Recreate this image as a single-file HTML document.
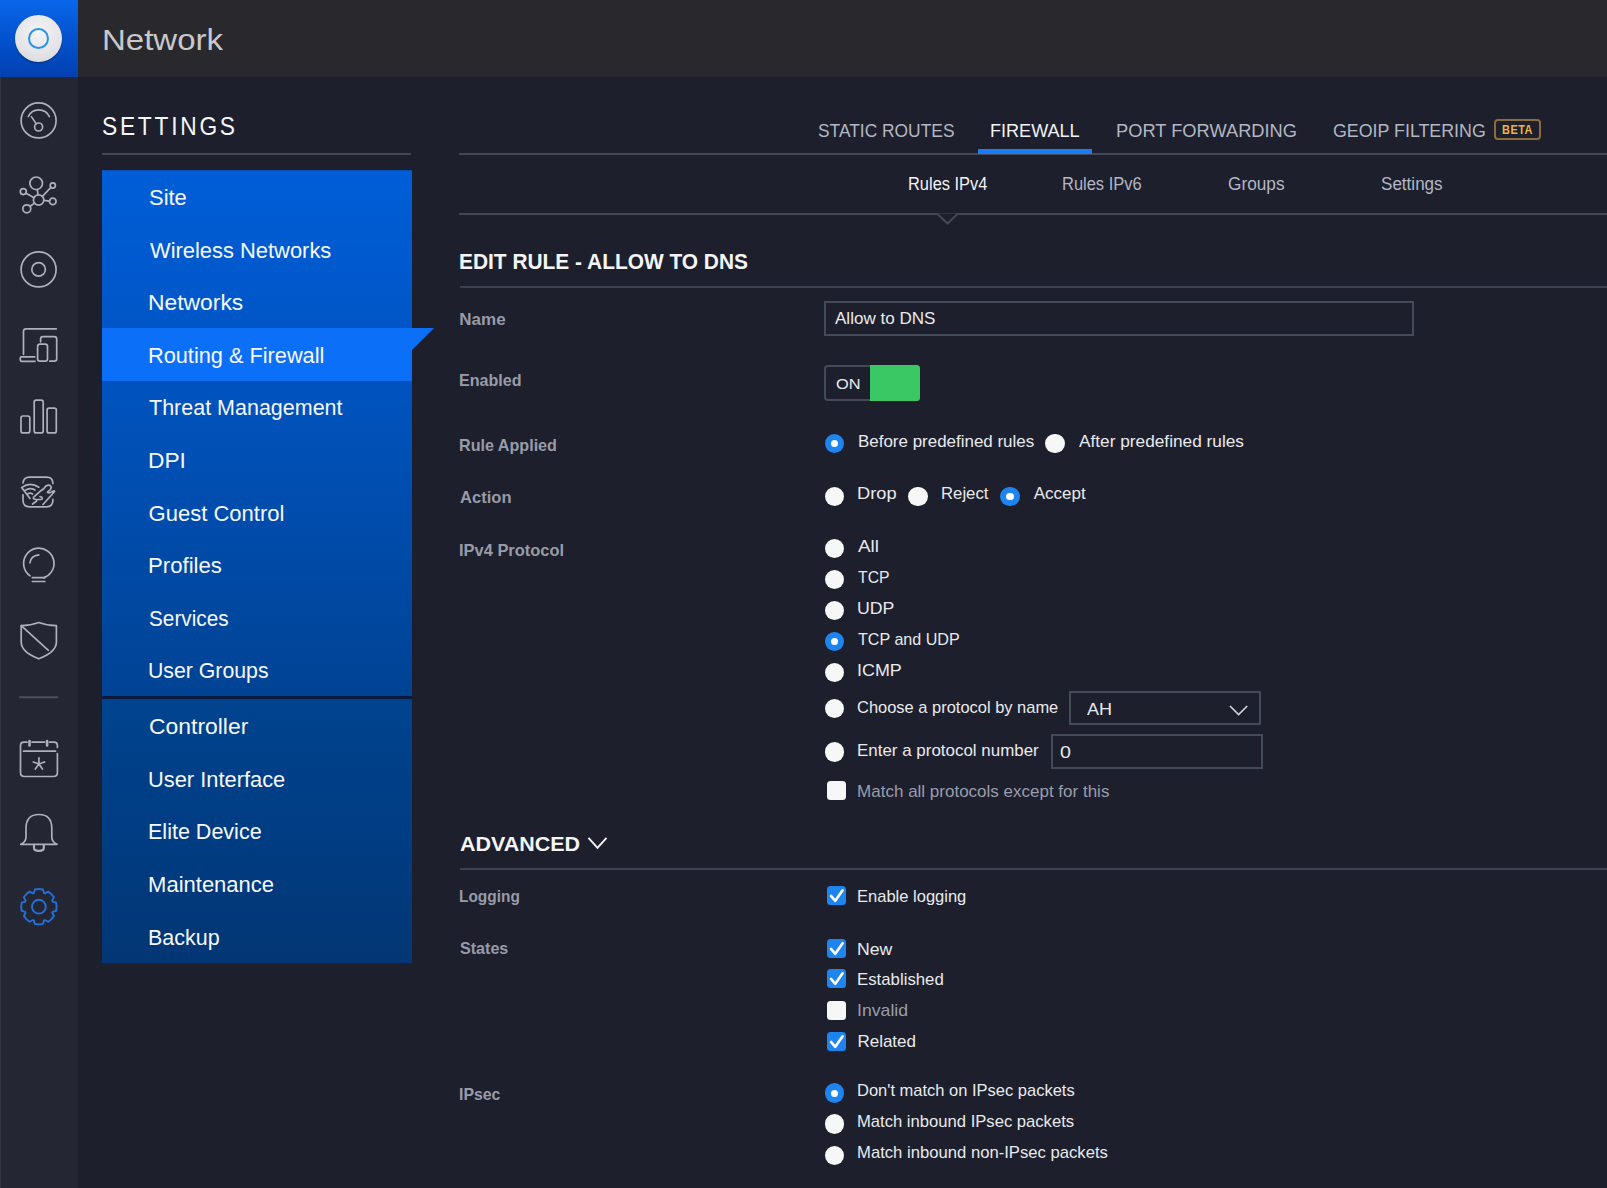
<!DOCTYPE html>
<html><head><meta charset="utf-8"><title>Network - Settings</title>
<style>
html,body{margin:0;padding:0;width:1607px;height:1188px;overflow:hidden;background:#1d1f2c;}
body{position:relative;font-family:"Liberation Sans",sans-serif;}
.t{position:absolute;white-space:nowrap;transform-origin:0 0;}
.b{position:absolute;box-sizing:content-box;}
svg.b{overflow:visible;}
</style></head><body>
<div class="b" style="left:0px;top:0px;width:1607px;height:77px;background:#29292d;"></div>
<div class="b" style="left:0px;top:0px;width:78px;height:77px;background:linear-gradient(180deg,#0a66ea 0%,#0352cf 50%,#0240b0 100%);"></div>
<div class="b" style="left:15px;top:15px;width:47px;height:47px;border-radius:50%;background:radial-gradient(circle at 50% 35%,#f4f4f6 0%,#e4e4e8 60%,#cfd0d6 100%);box-shadow:0 1px 2px rgba(0,0,0,0.35);"></div>
<div class="b" style="left:28px;top:28px;width:17px;height:17px;border-radius:50%;border:2px solid #2e90e6;"></div>
<div class="t" style="left:102.32px;top:25.31px;font-size:30px;line-height:30px;color:#c8c8cc;font-weight:400;transform:scaleX(1.0996);">Network</div>
<div class="b" style="left:0px;top:77px;width:78px;height:1111px;background:#242633;"></div>
<div class="b" style="left:0px;top:77px;width:1px;height:1111px;background:#333542;"></div>
<div class="b" style="left:6px;top:77px;width:1px;height:1111px;background:#282a37;"></div>
<svg class="b" style="left:0;top:77px" width="78" height="1111" viewBox="0 77 78 1111" fill="none" stroke="#adb0bd" stroke-width="1.7" stroke-linecap="round" stroke-linejoin="round">
<circle cx="38.6" cy="120.4" r="17.5"/>
<path d="M28.3 116.5 A11.6 11.6 0 0 1 49.3 116.5"/>
<path d="M31.4 116.6 L36.3 123.9"/>
<circle cx="38.6" cy="127" r="4"/>
<circle cx="38.6" cy="200" r="5.2"/>
<circle cx="36.2" cy="183.3" r="6.3"/>
<circle cx="23.3" cy="191.6" r="3"/>
<circle cx="52.8" cy="185.5" r="2.6"/>
<circle cx="52.8" cy="201.4" r="3.3"/>
<circle cx="26.8" cy="208.8" r="4"/>
<path d="M37.4 189.6 L38 194.8 M26 193.2 L33.7 197.6 M50.9 187.4 L42.4 196.3 M49.5 201.1 L43.8 200.4 M30.1 206.3 L34.4 203.1"/>
<circle cx="38.6" cy="269.4" r="17.5"/>
<circle cx="38.6" cy="269.4" r="6.8"/>
<path d="M56.3 328.8 H26 Q23.5 328.8 23.5 331.3 V354.3"/>
<path d="M34.7 356.8 H21.5 Q20.3 356.8 20.3 358 V360 Q20.3 361.3 21.5 361.3 H35"/>
<path d="M40.6 341.8 V339 Q40.6 336.6 43 336.6 H54.3 Q56.7 336.6 56.7 339 V358.8 Q56.7 361.2 54.3 361.2 H49.8"/>
<rect x="37.6" y="344.2" width="9.9" height="17" rx="2.4"/>
<rect x="21" y="416" width="8.8" height="16.9" rx="2"/>
<rect x="34.2" y="400.2" width="9" height="32.7" rx="2"/>
<rect x="47.1" y="408.1" width="9.2" height="24.8" rx="2"/>
<path d="M23 483 Q23.5 477.1 29.5 477.1 H46.4 Q52.9 477.1 52.9 483.4 M52.9 499.4 V500.3 Q52.9 506.8 46.4 506.8 H29.5 Q23 506.8 23 500.3 V494.8"/>
<path d="M21.6 487.6 L30 498.4 M21.6 487.6 Q30 481.5 38.8 487.2 M24.7 490.6 Q30 487 35 490 M27.5 494 Q30 492.3 32.5 494"/>
<path d="M33.4 497.3 Q33 499.5 36 499.5 H41 Q43.5 499 41.5 497 L40 496.5 M33.4 497.3 L41 490.6 Q43.5 489.5 46 486 Q49 484 51 486.2 Q52 489 48 491.5 L47.5 492.3 Q49 493.5 52 491.8 Q55 490 54.4 491.8 L43 504.5 M32.5 504 L36.7 501"/>
<circle cx="38.8" cy="563.4" r="15.2" stroke-dasharray="81 14.5" transform="rotate(125 38.8 563.4)"/>
<path d="M32.4 577.7 H44.9 M32.4 581.5 H44.9"/>
<path d="M30 562.8 Q30.5 556 38.8 554.8"/>
<path d="M21.2 625.7 Q31 625.5 38.8 622.5 Q46.6 625.5 56.4 625.7 V642 Q56.4 652 38.8 658.8 Q21.2 652 21.2 642 Z"/>
<path d="M21.2 625.7 L48.4 650.3"/>
<path d="M20 697.2 H57.2" stroke="#4d505d" stroke-width="2"/>
<path d="M27 742.2 H24 Q20.5 742.2 20.5 745.7 V772.5 Q20.5 776.5 24.5 776.5 H53.4 Q57.4 776.5 57.4 772.5 V753.5 M32 742.2 H44.6 M49.6 742.2 H54 Q57.4 742.2 57.4 745.7 V747.5"/>
<path d="M23.5 751.2 H55.5"/>
<path d="M29.5 741 V745.5 M47.1 741 V745.5" stroke-width="2.6"/>
<path d="M38.9 757.8 V764 M33.3 762 L38.9 764 L44.5 762 M35.3 769 L38.9 764 L42.5 769"/>
<path d="M26 828.5 Q26 814.5 38.9 814.5 Q51.8 814.5 51.8 828.5 V837.5 Q52 842 57 844.3 H20.8 Q25.8 842 26 837.5 Z"/>
<path d="M34 845 V848 Q34 850.8 38.9 850.8 Q43.8 850.8 43.8 848 V845" stroke-width="2.2"/>
</svg>
<svg class="b" style="left:0;top:880px" width="78" height="60" viewBox="0 880 78 60" fill="none" stroke="#2170dc" stroke-width="1.9" stroke-linejoin="round"><path d="M33.76 893.04 L34.86 889.47 A17.7 17.7 0 0 1 42.94 889.47 L44.04 893.04 A14.6 14.6 0 0 1 44.93 893.40 L48.23 891.66 A17.7 17.7 0 0 1 53.94 897.37 L52.20 900.67 A14.6 14.6 0 0 1 52.56 901.56 L56.13 902.66 A17.7 17.7 0 0 1 56.13 910.74 L52.56 911.84 A14.6 14.6 0 0 1 52.20 912.73 L53.94 916.03 A17.7 17.7 0 0 1 48.23 921.74 L44.93 920.00 A14.6 14.6 0 0 1 44.04 920.36 L42.94 923.93 A17.7 17.7 0 0 1 34.86 923.93 L33.76 920.36 A14.6 14.6 0 0 1 32.87 920.00 L29.57 921.74 A17.7 17.7 0 0 1 23.86 916.03 L25.60 912.73 A14.6 14.6 0 0 1 25.24 911.84 L21.67 910.74 A17.7 17.7 0 0 1 21.67 902.66 L25.24 901.56 A14.6 14.6 0 0 1 25.60 900.67 L23.86 897.37 A17.7 17.7 0 0 1 29.57 891.66 L32.87 893.40 A14.6 14.6 0 0 1 33.76 893.04 Z"/><circle cx="38.9" cy="906.7" r="6.9"/></svg>
<div class="b" style="left:78px;top:77px;width:1529px;height:1111px;background:#1d1f2c;"></div>
<div class="t" style="left:101.96px;top:114.24px;font-size:25px;line-height:25px;color:#f4f5f7;font-weight:400;letter-spacing:3px;transform:scaleX(0.9110);">SETTINGS</div>
<div class="b" style="left:102px;top:153px;width:309px;height:2px;background:#434855;"></div>
<div class="b" style="left:102px;top:170px;width:310px;height:526px;background:linear-gradient(180deg,#0a4aa8 0px,#005ed8 1.5px,#0056c6 30%,#004394 100%);"></div>
<div class="b" style="left:102px;top:699px;width:310px;height:263.5px;background:linear-gradient(180deg,#00438f 0%,#003c82 55%,#033674 100%);"></div>
<div class="b" style="left:102px;top:696px;width:310px;height:3px;background:#0b1a3a;"></div>
<div class="b" style="left:102px;top:328px;width:310px;height:52.6px;background:#0b6ff8;"></div>
<svg class="b" style="left:411px;top:328px" width="24" height="24"><path d="M0 0 H23.2 L0 23 Z" fill="#0b6ff8"/></svg>
<div class="t" style="left:148.58px;top:186.98px;font-size:22px;line-height:22px;color:#f7f9ff;font-weight:400;transform:scaleX(0.9969);">Site</div>
<div class="t" style="left:149.55px;top:239.58px;font-size:22px;line-height:22px;color:#f7f9ff;font-weight:400;transform:scaleX(0.9954);">Wireless Networks</div>
<div class="t" style="left:148.01px;top:292.18px;font-size:22px;line-height:22px;color:#f7f9ff;font-weight:400;transform:scaleX(1.0394);">Networks</div>
<div class="t" style="left:148.10px;top:344.78px;font-size:22px;line-height:22px;color:#f7f9ff;font-weight:400;transform:scaleX(0.9879);">Routing &amp; Firewall</div>
<div class="t" style="left:149.34px;top:397.38px;font-size:22px;line-height:22px;color:#f7f9ff;font-weight:400;transform:scaleX(0.9768);">Threat Management</div>
<div class="t" style="left:148.02px;top:449.98px;font-size:22px;line-height:22px;color:#f7f9ff;font-weight:400;transform:scaleX(1.0343);">DPI</div>
<div class="t" style="left:148.62px;top:502.58px;font-size:22px;line-height:22px;color:#f7f9ff;font-weight:400;">Guest Control</div>
<div class="t" style="left:148.07px;top:555.18px;font-size:22px;line-height:22px;color:#f7f9ff;font-weight:400;transform:scaleX(1.0078);">Profiles</div>
<div class="t" style="left:148.65px;top:607.78px;font-size:22px;line-height:22px;color:#f7f9ff;font-weight:400;transform:scaleX(0.9434);">Services</div>
<div class="t" style="left:148.20px;top:660.38px;font-size:22px;line-height:22px;color:#f7f9ff;font-weight:400;transform:scaleX(0.9669);">User Groups</div>
<div class="t" style="left:148.57px;top:715.98px;font-size:22px;line-height:22px;color:#f7f9ff;font-weight:400;transform:scaleX(1.0411);">Controller</div>
<div class="t" style="left:148.16px;top:768.68px;font-size:22px;line-height:22px;color:#f7f9ff;font-weight:400;transform:scaleX(0.9931);">User Interface</div>
<div class="t" style="left:148.12px;top:821.38px;font-size:22px;line-height:22px;color:#f7f9ff;font-weight:400;transform:scaleX(0.9783);">Elite Device</div>
<div class="t" style="left:148.08px;top:874.08px;font-size:22px;line-height:22px;color:#f7f9ff;font-weight:400;">Maintenance</div>
<div class="t" style="left:148.12px;top:926.78px;font-size:22px;line-height:22px;color:#f7f9ff;font-weight:400;transform:scaleX(0.9755);">Backup</div>
<div class="t" style="left:817.72px;top:120.72px;font-size:19px;line-height:19px;color:#b3b7c3;font-weight:400;transform:scaleX(0.9148);">STATIC ROUTES</div>
<div class="t" style="left:990.35px;top:120.72px;font-size:19px;line-height:19px;color:#f2f3f6;font-weight:400;transform:scaleX(0.9507);">FIREWALL</div>
<div class="t" style="left:1116.43px;top:120.72px;font-size:19px;line-height:19px;color:#b3b7c3;font-weight:400;transform:scaleX(0.9614);">PORT FORWARDING</div>
<div class="t" style="left:1332.89px;top:120.72px;font-size:19px;line-height:19px;color:#b3b7c3;font-weight:400;transform:scaleX(0.9375);">GEOIP FILTERING</div>
<div class="b" style="box-sizing:border-box;left:1494px;top:119px;width:47px;height:21px;border:2px solid #8a6d3b;border-radius:4px;"></div>
<div class="t" style="left:1502.25px;top:123.94px;font-size:12px;line-height:12px;color:#f0b43c;font-weight:700;letter-spacing:0.6px;transform:scaleX(0.9069);">BETA</div>
<div class="b" style="left:459px;top:153px;width:1148px;height:2px;background:#434855;"></div>
<div class="b" style="left:978px;top:149px;width:114px;height:5px;background:#1a7df6;"></div>
<div class="t" style="left:907.78px;top:174.76px;font-size:18px;line-height:18px;color:#f2f3f6;font-weight:400;transform:scaleX(0.9122);">Rules IPv4</div>
<div class="t" style="left:1062.37px;top:174.76px;font-size:18px;line-height:18px;color:#b3b7c3;font-weight:400;transform:scaleX(0.9149);">Rules IPv6</div>
<div class="t" style="left:1228.47px;top:174.76px;font-size:18px;line-height:18px;color:#b3b7c3;font-weight:400;transform:scaleX(0.9582);">Groups</div>
<div class="t" style="left:1381.11px;top:174.76px;font-size:18px;line-height:18px;color:#b3b7c3;font-weight:400;transform:scaleX(0.9476);">Settings</div>
<div class="b" style="left:459px;top:213px;width:1148px;height:2px;background:#434855;"></div>
<svg class="b" style="left:935px;top:212px" width="26" height="14"><path d="M2 1.5 L12.5 11.5 L23 1.5" fill="#1d1f2c" stroke="#434855" stroke-width="2"/></svg>
<div class="t" style="left:459.13px;top:250.88px;font-size:22px;line-height:22px;color:#f4f5f7;font-weight:700;transform:scaleX(0.9496);">EDIT RULE - ALLOW TO DNS</div>
<div class="b" style="left:460px;top:286px;width:1147px;height:2px;background:#3a4250;"></div>
<div class="t" style="left:459.32px;top:311.11px;font-size:17px;line-height:17px;color:#989ba8;font-weight:700;">Name</div>
<div class="t" style="left:459.38px;top:372.11px;font-size:17px;line-height:17px;color:#989ba8;font-weight:700;transform:scaleX(0.9472);">Enabled</div>
<div class="t" style="left:459.38px;top:437.21px;font-size:17px;line-height:17px;color:#989ba8;font-weight:700;transform:scaleX(0.9484);">Rule Applied</div>
<div class="t" style="left:459.94px;top:489.31px;font-size:17px;line-height:17px;color:#989ba8;font-weight:700;transform:scaleX(0.9745);">Action</div>
<div class="t" style="left:459.36px;top:541.81px;font-size:17px;line-height:17px;color:#989ba8;font-weight:700;transform:scaleX(0.9674);">IPv4 Protocol</div>
<div class="t" style="left:459.43px;top:888.31px;font-size:17px;line-height:17px;color:#989ba8;font-weight:700;transform:scaleX(0.9081);">Logging</div>
<div class="t" style="left:459.85px;top:940.11px;font-size:17px;line-height:17px;color:#989ba8;font-weight:700;transform:scaleX(0.9459);">States</div>
<div class="t" style="left:459.40px;top:1086.11px;font-size:17px;line-height:17px;color:#989ba8;font-weight:700;transform:scaleX(0.9304);">IPsec</div>
<div class="b" style="box-sizing:border-box;left:824px;top:300.5px;width:590px;height:35px;border:2px solid #434a58;"></div>
<div class="t" style="left:834.95px;top:310.41px;font-size:17px;line-height:17px;color:#e9eaee;font-weight:400;transform:scaleX(1.0031);">Allow to DNS</div>
<div class="b" style="box-sizing:border-box;left:824px;top:365px;width:95.5px;height:35.5px;border:2px solid #434a58;border-radius:4px;"></div>
<div class="b" style="left:870px;top:365px;width:49.5px;height:35.5px;background:#3ac864;border-radius:0 3.5px 3.5px 0;"></div>
<div class="t" style="left:836.45px;top:376.30px;font-size:15px;line-height:15px;color:#e9eaee;font-weight:400;transform:scaleX(1.0903);">ON</div>
<div class="b" style="left:824.8px;top:433.8px;width:19.4px;height:19.4px;border-radius:50%;background:#1e84f0;"></div>
<div class="b" style="left:830.9px;top:439.9px;width:7.2px;height:7.2px;border-radius:50%;background:#fff;"></div>
<div class="t" style="left:857.52px;top:433.11px;font-size:17px;line-height:17px;color:#e9eaee;font-weight:400;transform:scaleX(0.9969);">Before predefined rules</div>
<div class="b" style="left:1045.2px;top:433.9px;width:19.4px;height:19.4px;border-radius:50%;background:#f7f7f8;"></div>
<div class="t" style="left:1078.55px;top:433.11px;font-size:17px;line-height:17px;color:#e9eaee;font-weight:400;transform:scaleX(1.0147);">After predefined rules</div>
<div class="b" style="left:824.8px;top:486.5px;width:19.4px;height:19.4px;border-radius:50%;background:#f7f7f8;"></div>
<div class="t" style="left:857.42px;top:485.41px;font-size:17px;line-height:17px;color:#e9eaee;font-weight:400;transform:scaleX(1.0740);">Drop</div>
<div class="b" style="left:908.2px;top:486.5px;width:19.4px;height:19.4px;border-radius:50%;background:#f7f7f8;"></div>
<div class="t" style="left:940.94px;top:485.41px;font-size:17px;line-height:17px;color:#e9eaee;font-weight:400;transform:scaleX(0.9838);">Reject</div>
<div class="b" style="left:1000.3px;top:486.5px;width:19.4px;height:19.4px;border-radius:50%;background:#1e84f0;"></div>
<div class="b" style="left:1006.4px;top:492.6px;width:7.2px;height:7.2px;border-radius:50%;background:#fff;"></div>
<div class="t" style="left:1033.75px;top:485.41px;font-size:17px;line-height:17px;color:#e9eaee;font-weight:400;">Accept</div>
<div class="b" style="left:824.6px;top:538.9px;width:19.4px;height:19.4px;border-radius:50%;background:#f7f7f8;"></div>
<div class="t" style="left:858.02px;top:538.21px;font-size:17px;line-height:17px;color:#e9eaee;font-weight:400;transform:scaleX(1.1092);">All</div>
<div class="b" style="left:824.6px;top:569.8px;width:19.4px;height:19.4px;border-radius:50%;background:#f7f7f8;"></div>
<div class="t" style="left:857.97px;top:569.21px;font-size:17px;line-height:17px;color:#e9eaee;font-weight:400;transform:scaleX(0.9276);">TCP</div>
<div class="b" style="left:824.6px;top:600.8px;width:19.4px;height:19.4px;border-radius:50%;background:#f7f7f8;"></div>
<div class="t" style="left:856.92px;top:599.81px;font-size:17px;line-height:17px;color:#e9eaee;font-weight:400;transform:scaleX(1.0420);">UDP</div>
<div class="b" style="left:824.6px;top:631.8px;width:19.4px;height:19.4px;border-radius:50%;background:#1e84f0;"></div>
<div class="b" style="left:830.7px;top:637.9px;width:7.2px;height:7.2px;border-radius:50%;background:#fff;"></div>
<div class="t" style="left:857.96px;top:630.71px;font-size:17px;line-height:17px;color:#e9eaee;font-weight:400;transform:scaleX(0.9471);">TCP and UDP</div>
<div class="b" style="left:824.6px;top:662.8px;width:19.4px;height:19.4px;border-radius:50%;background:#f7f7f8;"></div>
<div class="t" style="left:856.69px;top:661.71px;font-size:17px;line-height:17px;color:#e9eaee;font-weight:400;transform:scaleX(1.0515);">ICMP</div>
<div class="b" style="left:824.6px;top:698.9px;width:19.4px;height:19.4px;border-radius:50%;background:#f7f7f8;"></div>
<div class="t" style="left:857.46px;top:699.11px;font-size:17px;line-height:17px;color:#e9eaee;font-weight:400;transform:scaleX(0.9681);">Choose a protocol by name</div>
<div class="b" style="box-sizing:border-box;left:1069px;top:691px;width:192px;height:34.3px;border:2px solid #434a58;"></div>
<div class="t" style="left:1086.63px;top:700.81px;font-size:17px;line-height:17px;color:#e9eaee;font-weight:400;transform:scaleX(1.0607);">AH</div>
<svg class="b" style="left:1226px;top:700px" width="26" height="20"><path d="M4 6 L12.6 14.6 L21.2 6" fill="none" stroke="#d0d2d8" stroke-width="1.7"/></svg>
<div class="b" style="left:824.6px;top:742.4px;width:19.4px;height:19.4px;border-radius:50%;background:#f7f7f8;"></div>
<div class="t" style="left:857.12px;top:742.01px;font-size:17px;line-height:17px;color:#e9eaee;font-weight:400;transform:scaleX(0.9965);">Enter a protocol number</div>
<div class="b" style="box-sizing:border-box;left:1050.6px;top:734px;width:212.4px;height:34.7px;border:2px solid #434a58;"></div>
<div class="t" style="left:1060.36px;top:743.51px;font-size:17px;line-height:17px;color:#e9eaee;font-weight:400;transform:scaleX(1.1557);">0</div>
<div class="b" style="left:826.6px;top:780.8px;width:19.2px;height:19.2px;border-radius:3.5px;background:#f7f7f8;"></div>
<div class="t" style="left:857.12px;top:783.01px;font-size:17px;line-height:17px;color:#9a9dab;font-weight:400;">Match all protocols except for this</div>
<div class="t" style="left:459.91px;top:834.07px;font-size:20px;line-height:20px;color:#f4f5f7;font-weight:700;transform:scaleX(1.0728);">ADVANCED</div>
<svg class="b" style="left:584px;top:832px" width="28" height="22"><path d="M4.5 5.8 L13.5 15.8 L22.5 5.8" fill="none" stroke="#f0f1f4" stroke-width="2"/></svg>
<div class="b" style="left:460px;top:868px;width:1147px;height:2px;background:#3a4250;"></div>
<div class="b" style="left:826.6px;top:885.9px;width:19.2px;height:19.2px;border-radius:3.5px;background:#1e84f0;"></div>
<svg class="b" style="left:826.6px;top:885.9px" width="20" height="20"><path d="M4 9.9 L8.3 14.8 L15.6 4.3" fill="none" stroke="#fff" stroke-width="2.6" stroke-linecap="round" stroke-linejoin="round"/></svg>
<div class="t" style="left:857.46px;top:888.31px;font-size:17px;line-height:17px;color:#e9eaee;font-weight:400;transform:scaleX(0.9718);">Enable logging</div>
<div class="b" style="left:826.6px;top:938.9px;width:19.2px;height:19.2px;border-radius:3.5px;background:#1e84f0;"></div>
<svg class="b" style="left:826.6px;top:938.9px" width="20" height="20"><path d="M4 9.9 L8.3 14.8 L15.6 4.3" fill="none" stroke="#fff" stroke-width="2.6" stroke-linecap="round" stroke-linejoin="round"/></svg>
<div class="t" style="left:857.37px;top:940.81px;font-size:17px;line-height:17px;color:#e9eaee;font-weight:400;transform:scaleX(1.0394);">New</div>
<div class="b" style="left:826.6px;top:969.2px;width:19.2px;height:19.2px;border-radius:3.5px;background:#1e84f0;"></div>
<svg class="b" style="left:826.6px;top:969.2px" width="20" height="20"><path d="M4 9.9 L8.3 14.8 L15.6 4.3" fill="none" stroke="#fff" stroke-width="2.6" stroke-linecap="round" stroke-linejoin="round"/></svg>
<div class="t" style="left:857.44px;top:971.21px;font-size:17px;line-height:17px;color:#e9eaee;font-weight:400;transform:scaleX(0.9874);">Established</div>
<div class="b" style="left:826.6px;top:1000.9px;width:19.2px;height:19.2px;border-radius:3.5px;background:#f7f7f8;"></div>
<div class="t" style="left:857.21px;top:1002.31px;font-size:17px;line-height:17px;color:#9a9dab;font-weight:400;transform:scaleX(1.0393);">Invalid</div>
<div class="b" style="left:826.6px;top:1031.5px;width:19.2px;height:19.2px;border-radius:3.5px;background:#1e84f0;"></div>
<svg class="b" style="left:826.6px;top:1031.5px" width="20" height="20"><path d="M4 9.9 L8.3 14.8 L15.6 4.3" fill="none" stroke="#fff" stroke-width="2.6" stroke-linecap="round" stroke-linejoin="round"/></svg>
<div class="t" style="left:857.42px;top:1033.21px;font-size:17px;line-height:17px;color:#e9eaee;font-weight:400;">Related</div>
<div class="b" style="left:824.6px;top:1083.4px;width:19.4px;height:19.4px;border-radius:50%;background:#1e84f0;"></div>
<div class="b" style="left:830.7px;top:1089.5px;width:7.2px;height:7.2px;border-radius:50%;background:#fff;"></div>
<div class="t" style="left:857.46px;top:1081.81px;font-size:17px;line-height:17px;color:#e9eaee;font-weight:400;transform:scaleX(0.9701);">Don&#x27;t match on IPsec packets</div>
<div class="b" style="left:824.6px;top:1114.4px;width:19.4px;height:19.4px;border-radius:50%;background:#f7f7f8;"></div>
<div class="t" style="left:857.45px;top:1112.61px;font-size:17px;line-height:17px;color:#e9eaee;font-weight:400;transform:scaleX(0.9776);">Match inbound IPsec packets</div>
<div class="b" style="left:824.6px;top:1145.7px;width:19.4px;height:19.4px;border-radius:50%;background:#f7f7f8;"></div>
<div class="t" style="left:857.45px;top:1143.91px;font-size:17px;line-height:17px;color:#e9eaee;font-weight:400;transform:scaleX(0.9798);">Match inbound non-IPsec packets</div>
</body></html>
